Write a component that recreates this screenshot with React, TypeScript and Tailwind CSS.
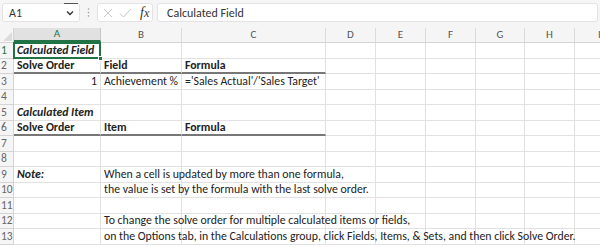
import React from "react";

const COLS = [87, 81, 144, 50, 50, 50, 49, 50, 50];
const COL_NAMES = ["A", "B", "C", "D", "E", "F", "G", "H", "I"];
const ROW_H = [16, 15, 16, 15, 16, 15, 16, 15, 16, 15, 16, 15, 16];

type Cell = { t?: string; cls?: string; right?: boolean };

const rows: Record<number, Record<number, Cell>> = {
  1: { 0: { t: "Calculated Field", cls: "font-bold italic" } },
  2: { 0: { t: "Solve Order", cls: "font-bold" }, 1: { t: "Field", cls: "font-bold" }, 2: { t: "Formula", cls: "font-bold" } },
  3: { 0: { t: "1", right: true }, 1: { t: "Achievement %" }, 2: { t: "='Sales Actual'/'Sales Target'" } },
  5: { 0: { t: "Calculated Item", cls: "font-bold italic" } },
  6: { 0: { t: "Solve Order", cls: "font-bold" }, 1: { t: "Item", cls: "font-bold" }, 2: { t: "Formula", cls: "font-bold" } },
  9: { 0: { t: "Note:", cls: "font-bold italic" }, 1: { t: "When a cell is updated by more than one formula," } },
  10: { 1: { t: "the value is set by the formula with the last solve order." } },
  12: { 1: { t: "To change the solve order for multiple calculated items or fields," } },
  13: { 1: { t: "on the Options tab, in the Calculations group, click Fields, Items, & Sets, and then click Solve Order." } },
};

const font = { fontFamily: "Carlito, Lato, 'Liberation Sans', sans-serif" };

export default function App() {
  return (
    <div className="w-[600px] h-[247px] overflow-hidden bg-white text-[#222]" style={font}>
      {/* formula bar */}
      <div className="h-[28px] bg-[#f5f5f5] flex items-start pt-[3px] pl-[2px] pr-[2px]">
        <div className="relative w-[78px] h-[19px] bg-white border border-[#e3e3e3] rounded-[3px] flex items-center pl-[6px] text-[12px] text-[#333]">
          A1
          <div className="absolute right-[1px] top-[-1px] w-[14px] h-[1px] bg-[#555]" />
          <svg className="absolute right-[5px] top-[6px]" width="8" height="6" viewBox="0 0 8 6">
            <path d="M1 1.5 L4 4.5 L7 1.5" fill="none" stroke="#333" strokeWidth="1.4" />
          </svg>
        </div>
        <div className="w-[17px] h-[19px] flex items-center justify-center">
          <svg width="3" height="9" viewBox="0 0 3 9">
            <circle cx="1.5" cy="1" r="0.8" fill="#999" />
            <circle cx="1.5" cy="4.5" r="0.8" fill="#999" />
            <circle cx="1.5" cy="8" r="0.8" fill="#999" />
          </svg>
        </div>
        <div className="w-[56px] h-[19px] bg-white border border-[#e3e3e3] rounded-[3px] flex items-center pl-[5px] gap-[6px]">
          <svg width="10" height="10" viewBox="0 0 10 10">
            <path d="M1 1 L9 9 M9 1 L1 9" stroke="#c8c8c8" strokeWidth="1" />
          </svg>
          <svg width="13" height="10" viewBox="0 0 13 10">
            <path d="M1 5.5 L4.5 9 L12 1" fill="none" stroke="#c8c8c8" strokeWidth="1" />
          </svg>
          <span className="text-[14px] italic text-[#333] leading-none ml-[2px]" style={{ fontFamily: "'Liberation Serif', serif" }}>
            f<span className="text-[12px]">x</span>
          </span>
        </div>
        <div className="ml-[4px] flex-1 h-[19px] bg-white border border-[#e3e3e3] rounded-[3px] flex items-center pl-[9px] text-[12px] text-[#333]">
          Calculated Field
        </div>
      </div>
      {/* column headers */}
      <div className="flex h-[15px] bg-[#f5f5f5] border-b border-[#d4d4d4]">
        <div className="w-[14px] shrink-0 border-r border-[#d4d4d4] relative">
          <svg className="absolute right-[1px] bottom-[1px]" width="9" height="9" viewBox="0 0 9 9">
            <path d="M9 0 L9 9 L0 9 Z" fill="#dcdcdc" />
          </svg>
        </div>
        {COLS.map((w, i) => (
          <div
            key={i}
            style={{ width: w }}
            className={
              "shrink-0 flex items-center justify-center text-[11px] border-r " +
              (i === 0 ? "bg-[#e1e1e1] text-[#217346] border-[#c6c6c6] border-b-2 border-b-[#217346]" : "text-[#555] border-[#dadada]")
            }
          >
            {COL_NAMES[i]}
          </div>
        ))}
      </div>
      {/* rows */}
      {ROW_H.map((h, ri) => {
        const r = ri + 1;
        const data = rows[r] || {};
        const thick = r === 2 || r === 6;
        return (
          <div key={r} className="flex" style={{ height: h }}>
            <div
              className={
                "w-[14px] shrink-0 bg-[#f5f5f5] border-r border-b border-[#d4d4d4] flex items-center text-[11.5px] pl-[1px] " +
                (r === 1 ? "text-[#217346] bg-[#e1e1e1]" : "text-[#666]")
              }
            >
              {r}
            </div>
            {COLS.map((w, ci) => {
              const c = data[ci];
              const thickB = thick && ci < 3;
              return (
                <div
                  key={ci}
                  style={{ width: w }}
                  className={
                    "shrink-0 relative border-r border-[#e1e1e1] flex items-center text-[11.8px] whitespace-nowrap " +
                    (thickB ? "border-b-2 border-b-[#777] " : "border-b ") +
                    (!thickB ? "border-b-[#e1e1e1] " : "") +
                    (c?.right ? "justify-end pr-[3px] " : "pl-[3px] ") +
                    (c?.cls ?? "")
                  }
                >
                  {c?.t && <span className="relative z-10">{c.t}</span>}
                  {r === 1 && ci === 0 && (
                    <div className="absolute left-[-1px] top-[-1px] right-[-1px] bottom-[-1px] border-2 border-[#217346] z-20">
                      <div className="absolute right-[-4px] bottom-[-4px] w-[5px] h-[5px] bg-[#217346] border border-white" />
                    </div>
                  )}
                </div>
              );
            })}
          </div>
        );
      })}
    </div>
  );
}
